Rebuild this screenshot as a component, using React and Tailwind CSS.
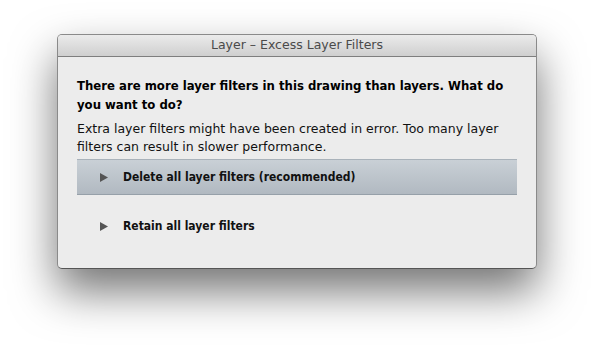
const Triangle = () => (
  <svg width="8" height="9" viewBox="0 0 8 9" className="shrink-0">
    <path d="M0 0 L8 4.5 L0 9 Z" fill="#555" />
  </svg>
);

const bold = "font-['DejaVu_Sans_Condensed','DejaVu_Sans',sans-serif] font-bold";

export default function App() {
  return (
    <div className="w-[594px] h-[348px] bg-white pl-[57px] pt-[34px] font-['DejaVu_Sans',sans-serif]">
      <div className="w-[480px] h-[235px] rounded-[5px] bg-[#ececec] border border-[#8a8a8a] border-b-[#555] shadow-[0_22px_45px_rgba(0,0,0,0.55)] overflow-hidden flex flex-col">
        <div className="h-[22px] shrink-0 flex items-center justify-center bg-gradient-to-b from-[#ebebeb] to-[#cfcfcf] border-b border-[#7e7e7e] text-[12.5px] text-[#4a4a4a]">
          Layer – Excess Layer Filters
        </div>
        <div className="px-[19px] pt-[19px]">
          <p className={`${bold} text-[13px] leading-[19px] text-black pr-[4px]`}>
            There are more layer filters in this drawing than layers. What do you want to do?
          </p>
          <p className="mt-[6px] text-[12.5px] leading-[18px] text-[#111]">
            Extra layer filters might have been created in error. Too many layer filters can result in slower performance.
          </p>
          <div className="mt-[3px] h-[36px] flex items-center gap-[15px] pl-[23px] bg-gradient-to-b from-[#c9d0d6] to-[#b1b9c1] border-t border-[#a9b2ba] border-b border-b-[#96a0a9]">
            <Triangle />
            <span className={`${bold} text-[12px] text-[#111]`}>Delete all layer filters (recommended)</span>
          </div>
          <div className="h-[62px] flex items-center gap-[15px] pl-[23px]">
            <Triangle />
            <span className={`${bold} text-[12px] text-[#111]`}>Retain all layer filters</span>
          </div>
        </div>
      </div>
    </div>
  );
}
